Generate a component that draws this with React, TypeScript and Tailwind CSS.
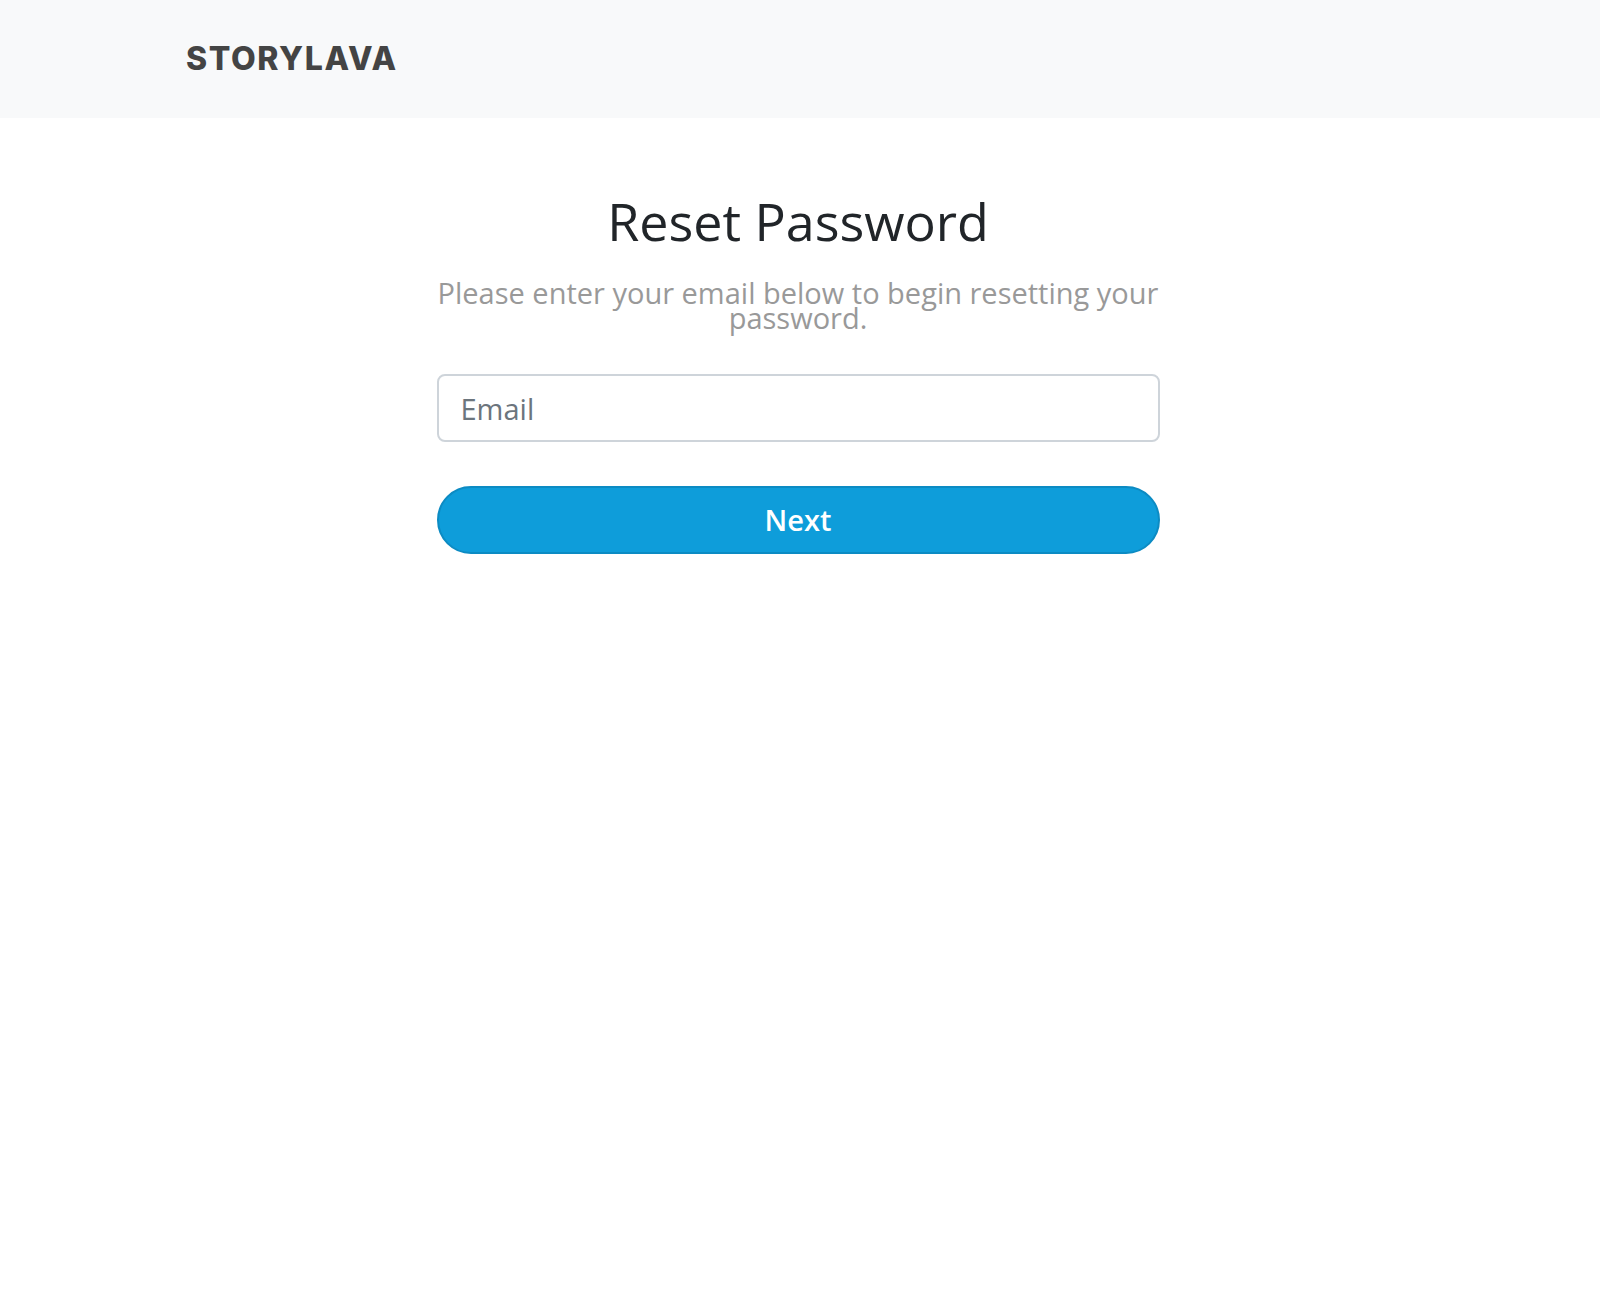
import React, { useState } from 'react';

const ResetPasswordPage: React.FC = () => {
    const [email, setEmail] = useState('');

    const handleSubmit = (e: React.FormEvent) => {
        e.preventDefault();
    };

    return (
        <div className="min-h-screen bg-white font-['Open_Sans',sans-serif] text-[#212529]">
            <header className="bg-[#f8f9fa] py-8">
                <div className="mx-auto w-full max-w-[1228px]">
                    <a href="/" className="inline-block align-top font-['Inter',sans-serif] text-[32px] leading-[54px] font-extrabold tracking-wider text-[#444444]">
                        STORYLAVA
                    </a>
                </div>
            </header>

            <main className="pt-18 pr-1">
                <div className="mx-auto w-full max-w-[723px]">
                    <h1 className="text-center text-[52px] leading-[62px] font-normal">Reset Password</h1>
                    <p className="mt-7 text-center text-[29px] leading-[25px] text-[#999999]">
                        Please enter your email below to begin resetting your password.
                    </p>

                    <form onSubmit={handleSubmit} className="mt-11">
                        <input
                            type="email"
                            aria-label="Email"
                            placeholder="Email"
                            value={email}
                            onChange={e => setEmail(e.target.value)}
                            className="block h-[68px] w-full rounded-lg border-2 border-[#ced4da] px-[22px] text-[29px] placeholder:text-[#6c757d]"
                        />
                        <button
                            type="submit"
                            className="mt-11 block h-[68px] w-full rounded-full border-2 border-[#0c8bc3] bg-[#0e9dda] text-[29px] font-semibold text-white"
                        >
                            Next
                        </button>
                    </form>
                </div>
            </main>
        </div>
    );
};

export default ResetPasswordPage;
